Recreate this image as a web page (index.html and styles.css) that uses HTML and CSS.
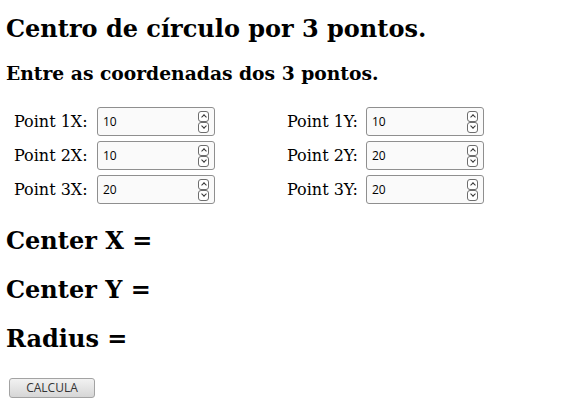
FILE: index.html
```html
<!DOCTYPE html>
<html lang="pt">
<head>
    <meta charset="UTF-8">
    <meta name="viewport" content="width=device-width, initial-scale=1.0">
    <title>Centro de círculo</title>
    <link rel="stylesheet" href="styles.css">
</head>
<body>
    <h1 class="title">Centro de círculo por 3 pontos.</h1>
    <h3 class="subtitle">Entre as coordenadas dos 3 pontos.</h3>

    <div class="points">
        <label class="point-label">Point 1X:</label>
        <div class="num"><input type="text" value="10"><span class="spin"><i class="up"></i><i class="down"></i></span></div>
        <span></span>
        <label class="point-label">Point 1Y:</label>
        <div class="num"><input type="text" value="10"><span class="spin"><i class="up"></i><i class="down"></i></span></div>

        <label class="point-label">Point 2X:</label>
        <div class="num"><input type="text" value="10"><span class="spin"><i class="up"></i><i class="down"></i></span></div>
        <span></span>
        <label class="point-label">Point 2Y:</label>
        <div class="num"><input type="text" value="20"><span class="spin"><i class="up"></i><i class="down"></i></span></div>

        <label class="point-label">Point 3X:</label>
        <div class="num"><input type="text" value="20"><span class="spin"><i class="up"></i><i class="down"></i></span></div>
        <span></span>
        <label class="point-label">Point 3Y:</label>
        <div class="num"><input type="text" value="20"><span class="spin"><i class="up"></i><i class="down"></i></span></div>
    </div>

    <h2 class="result">Center X =</h2>
    <h2 class="result">Center Y =</h2>
    <h2 class="result">Radius =</h2>

    <button class="calc">CALCULA</button>
</body>
</html>
```

FILE: styles.css
```css
body {
    margin: 0 8px 8px 6px;
    font-family: "DejaVu Serif", serif;
    color: #000;
    background: #fff;
}

.title {
    font-size: 24px;
    margin: 14px 0 0;
}

.subtitle {
    font-size: 18.72px;
    margin: 19px 0 0;
}

.points {
    display: grid;
    grid-template-columns: 83px 118px 72px 79px 118px;
    row-gap: 5px;
    padding-left: 8px;
    margin-top: 23px;
}

.point-label {
    font-size: 16px;
    line-height: 29px;
}

.num {
    display: flex;
    align-items: center;
    height: 29px;
    box-sizing: border-box;
    border: 1px solid #8f8f8f;
    border-radius: 3px;
    background: #fafafa;
    padding: 0 5px 0 5px;
}

.num input {
    flex: 1;
    min-width: 0;
    border: none;
    background: transparent;
    font-family: "Open Sans", sans-serif;
    font-size: 12px;
    padding: 0;
    color: #000;
    outline: none;
}

.spin {
    display: flex;
    flex-direction: column;
    width: 11px;
}

.spin i {
    display: block;
    height: 11px;
    box-sizing: border-box;
    border: 1px solid #6d6d6d;
    border-radius: 3px;
    background: #fff;
    position: relative;
}

.spin i::after {
    content: "";
    position: absolute;
    left: 3px;
    width: 3px;
    height: 3px;
    border-left: 1px solid #333;
    border-top: 1px solid #333;
}

.spin .up::after {
    top: 3px;
    transform: rotate(45deg);
}

.spin .down::after {
    top: 1px;
    transform: rotate(225deg);
}

.result {
    font-size: 24px;
    margin: 19.92px 0;
}

.points + .result {
    margin-top: 22px;
}

.calc {
    margin: 5px 0 0 3px;
    width: 86px;
    height: 20px;
    padding: 0;
    font-family: "Open Sans", sans-serif;
    font-size: 12px;
    color: #333;
    border: 1px solid #a3a3a3;
    border-radius: 3px;
    background: linear-gradient(#f2f2f2, #d6d6d6);
}
```
